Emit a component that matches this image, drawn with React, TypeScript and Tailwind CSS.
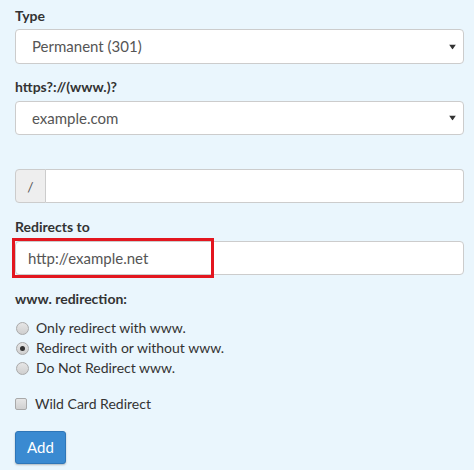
import React from "react";

function Arrow() {
  return (
    <svg width="7" height="5" viewBox="0 0 7 5" className="absolute right-[7px] top-1/2 -translate-y-1/2">
      <path d="M0 0 L7 0 L3.5 5 Z" fill="#333" />
    </svg>
  );
}

function Radio({ checked }: { checked?: boolean }) {
  return (
    <span className="w-[13px] h-[13px] rounded-full border border-[#a9a9a9] bg-gradient-to-b from-[#e6e6e6] to-[#cfcfcf] flex items-center justify-center shrink-0">
      {checked && <span className="w-[5px] h-[5px] rounded-full bg-[#333]" />}
    </span>
  );
}

export default function App() {
  const font = { fontFamily: "Lato, 'Liberation Sans', sans-serif" };
  return (
    <div className="w-[474px] h-[470px] bg-[#eaf6fd] pl-[15px] pr-[10px] pt-[6px] text-[#333]" style={font}>
      <div className="text-[14px] font-bold leading-[20px]">Type</div>
      <div className="relative mt-[3px] h-[35px] bg-white border border-[#ccc] rounded-[4px] flex items-center pl-[16px] text-[15px] text-[#555]">
        Permanent (301)
        <Arrow />
      </div>

      <div className="text-[14px] font-bold leading-[20px] mt-[13px]">https?://(www.)?</div>
      <div className="relative mt-[4px] h-[34px] bg-white border border-[#ccc] rounded-[4px] flex items-center pl-[16px] text-[15px] text-[#555]">
        example.com
        <Arrow />
      </div>

      <div className="mt-[34px] h-[34px] flex">
        <div className="w-[31px] bg-[#eee] border border-[#ccc] rounded-l-[4px] flex items-center justify-center text-[14px] text-[#555]">/</div>
        <div className="flex-1 bg-white border border-l-0 border-[#ccc] rounded-r-[4px]" />
      </div>

      <div className="text-[14px] font-bold leading-[20px] mt-[14px]">Redirects to</div>
      <div className="relative mt-[4px] h-[34px] bg-white border border-[#ccc] rounded-[4px] flex items-center pl-[12px] text-[15px] text-[#555]">
        http://example.net
        <div className="absolute left-[-4px] top-[-4px] w-[202px] h-[40px] border-[3px] border-[#e3161f]" />
      </div>

      <div className="text-[14px] font-bold leading-[20px] mt-[14px]">www. redirection:</div>
      <div className="mt-[9px] flex flex-col text-[14px] leading-[20px]">
        <label className="flex items-center gap-[7px] pl-[1px]"><Radio /> Only redirect with www.</label>
        <label className="flex items-center gap-[7px] pl-[1px]"><Radio checked /> Redirect with or without www.</label>
        <label className="flex items-center gap-[7px] pl-[1px]"><Radio /> Do Not Redirect www.</label>
      </div>

      <label className="mt-[16px] flex items-center gap-[8px] text-[14px] leading-[20px]">
        <span className="w-[12px] h-[12px] rounded-[2px] border border-[#a9a9a9] bg-gradient-to-b from-[#e6e6e6] to-[#d0d0d0] shrink-0" />
        Wild Card Redirect
      </label>

      <button className="mt-[17px] w-[51px] h-[33px] bg-[#3a8ad1] border border-[#2e76b8] rounded-[3px] text-white text-[15px] shadow-[0_1px_2px_rgba(0,0,0,0.25)]">
        Add
      </button>
    </div>
  );
}
